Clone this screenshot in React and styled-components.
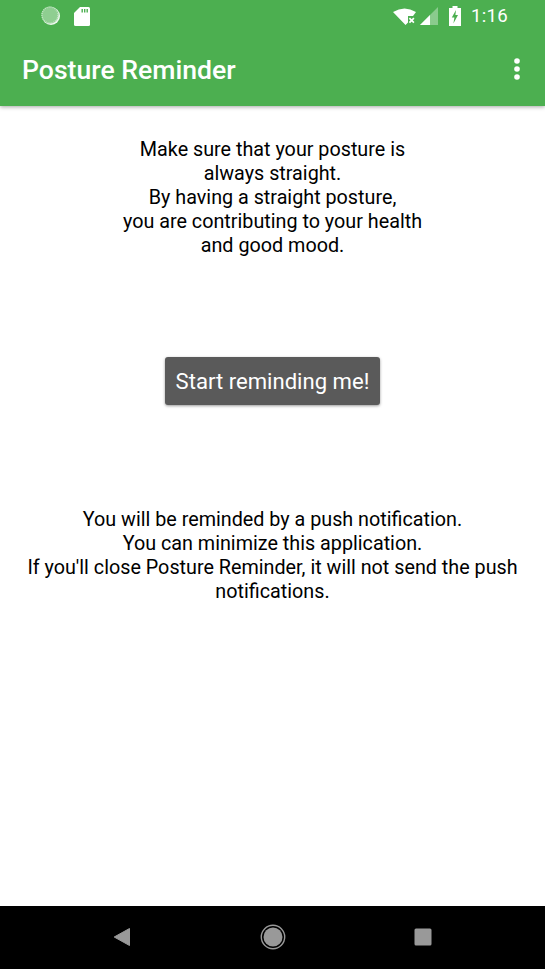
import React from "react";
import styled, { createGlobalStyle } from "styled-components";

const Global = createGlobalStyle`
  html, body { margin: 0; padding: 0; background: #fff; }
  #root { height: 969px; }
  * { box-sizing: border-box; }
`;

const Screen = styled.div`
  width: 545px;
  height: 969px;
  display: flex;
  flex-direction: column;
  font-family: Roboto, "Liberation Sans", sans-serif;
  background: #fff;
  overflow: hidden;
`;

const Header = styled.header`
  height: 106px;
  flex: none;
  background: #4caf50;
  box-shadow: 0 1px 4px rgba(0, 0, 0, 0.35);
  display: flex;
  flex-direction: column;
  position: relative;
  z-index: 1;
`;

const StatusBar = styled.div`
  height: 33px;
  display: flex;
  align-items: center;
  justify-content: space-between;
  padding: 0 37px 1px 41px;
`;

const StatusGroup = styled.div`
  display: flex;
  align-items: center;
  gap: ${(p) => p.$gap}px;
`;

const BatterySlot = styled.span`
  display: flex;
  margin: 0 6px 0 7px;
`;

const Clock = styled.span`
  color: #fff;
  font-size: 18.6px;
  letter-spacing: 0.3px;
`;

const Toolbar = styled.div`
  flex: 1;
  display: flex;
  align-items: center;
  justify-content: space-between;
  padding: 0 25px 0 22px;
`;

const Title = styled.h1`
  margin: 0;
  color: #fff;
  font-size: 26.6px;
  font-weight: 500;
`;

const MenuButton = styled.span`
  display: flex;
  margin-bottom: 2px;
`;

const Content = styled.main`
  flex: 1;
  display: flex;
  flex-direction: column;
  align-items: center;
  padding-top: 32px;
`;

const Paragraph = styled.p`
  margin: 0;
  width: 100%;
  padding: 0 24px;
  text-align: center;
  color: #000;
  font-size: 19.75px;
  line-height: 24px;
`;

const ActionButton = styled.button`
  margin: 99px 0 103px;
  width: 215px;
  height: 48px;
  border: 0;
  border-radius: 3px;
  background: #5a5a5a;
  color: #fff;
  font-family: inherit;
  font-size: 22.1px;
  box-shadow: 0 1px 3px rgba(0, 0, 0, 0.4);
  padding: 0;
`;

const NavBar = styled.nav`
  height: 63px;
  flex: none;
  background: #000;
  display: flex;
  align-items: center;
  justify-content: space-between;
  padding: 0 113px 1px;
`;

const Back = () => (
  <svg width="18" height="20" viewBox="0 0 18 20">
    <path d="M16.5 1.5 L1.2 10 L16.5 18.5 Z" fill="#999" stroke="#999" strokeLinejoin="round" />
  </svg>
);
const Home = () => (
  <svg width="26" height="26" viewBox="0 0 26 26">
    <circle cx="13" cy="13" r="11.7" fill="none" stroke="#999" strokeWidth="1.4" />
    <circle cx="13" cy="13" r="9.5" fill="#999" />
  </svg>
);
const Recent = () => (
  <svg width="18" height="18" viewBox="0 0 18 18">
    <rect x="0.5" y="0.5" width="17" height="17" rx="1.5" fill="#999" />
  </svg>
);

const Spinner = () => (
  <svg width="20" height="20" viewBox="0 0 20 20">
    <circle cx="10" cy="10" r="9" fill="#fff" opacity="0.9" />
    <circle cx="9" cy="9" r="8.6" fill="#8fce91" />
    <circle cx="9" cy="9" r="8" fill="none" stroke="#c3e5c4" strokeWidth="1.4" strokeDasharray="1 1" />
  </svg>
);
const SdCard = () => (
  <svg width="16" height="19" viewBox="0 0 16 19">
    <path d="M6 0 H14.5 A1.5 1.5 0 0 1 16 1.5 V17.5 A1.5 1.5 0 0 1 14.5 19 H1.5 A1.5 1.5 0 0 1 0 17.5 V6 Z" fill="#fff" />
    <path d="M7.5 2 h1.4 v3.4 h-1.4z M10 2 h1.4 v3.4 h-1.4z M12.5 2 h1.4 v3.4 h-1.4z" fill="#4caf50" />
  </svg>
);
const Wifi = () => (
  <svg width="23" height="17" viewBox="0 0 23 17">
    <path d="M0 4 Q11.5 -3 23 4 L20 8 H15 V14.5 L12.5 17 Z" fill="#fff" />
    <path d="M16.4 10.2 L20.9 14.7 M20.9 10.2 L16.4 14.7" stroke="#fff" strokeWidth="1.7" />
  </svg>
);
const Signal = () => (
  <svg width="18" height="18" viewBox="0 0 18 18">
    <path d="M0 18 L18 0 V18 Z" fill="#fff" opacity="0.35" />
    <path d="M0 18 L10 8 V18 Z" fill="#fff" />
  </svg>
);
const Battery = () => (
  <svg width="12" height="20" viewBox="0 0 12 20">
    <path d="M3.5 0 H8.5 V2 H12 V20 H0 V2 H3.5 Z" fill="#fff" />
    <path d="M7 4 L2.8 11.5 H5.4 L4.4 17.5 L9 9 H6.4 Z" fill="#4caf50" />
  </svg>
);
const MoreDots = () => (
  <svg width="6" height="22" viewBox="0 0 6 22">
    <circle cx="3" cy="3" r="2.8" fill="#fff" />
    <circle cx="3" cy="11" r="2.8" fill="#fff" />
    <circle cx="3" cy="19" r="2.8" fill="#fff" />
  </svg>
);

export default function App() {
  return (
    <Screen>
      <Global />
      <Header>
        <StatusBar>
          <StatusGroup $gap={13}>
            <Spinner />
            <SdCard />
          </StatusGroup>
          <StatusGroup $gap={4}>
            <Wifi />
            <Signal />
            <BatterySlot>
              <Battery />
            </BatterySlot>
            <Clock>1:16</Clock>
          </StatusGroup>
        </StatusBar>
        <Toolbar>
          <Title>Posture Reminder</Title>
          <MenuButton>
            <MoreDots />
          </MenuButton>
        </Toolbar>
      </Header>
      <Content>
        <Paragraph>
          Make sure that your posture is
          <br />
          always straight.
          <br />
          By having a straight posture,
          <br />
          you are contributing to your health
          <br />
          and good mood.
        </Paragraph>
        <ActionButton>Start reminding me!</ActionButton>
        <Paragraph>
          You will be reminded by a push notification.
          <br />
          You can minimize this application.
          <br />
          If you'll close Posture Reminder, it will not send the push notifications.
        </Paragraph>
      </Content>
      <NavBar>
        <Back />
        <Home />
        <Recent />
      </NavBar>
    </Screen>
  );
}
